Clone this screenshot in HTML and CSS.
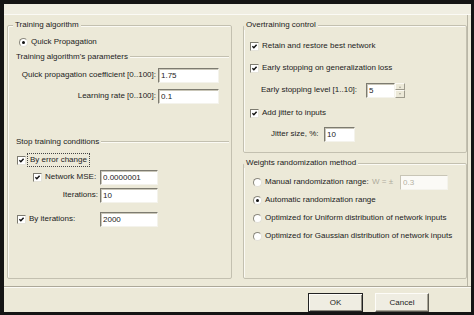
FILE: index.html
```
<!DOCTYPE html>
<html lang="en">
<head>
    <meta charset="UTF-8">
    <title>Training settings</title>
    <link rel="stylesheet" href="styles.css">
</head>
<body>
<div class="frame">
<div class="dialog">
    <div class="topbar"></div>

    <div class="page">
        <!-- Left: training algorithm -->
        <fieldset class="group group-left">
            <legend>Training algorithm</legend>
            <div class="row r-qp"><span class="radio on"></span><span class="txt">Quick Propagation</span></div>

            <div class="subhead sh-params"><span>Training algorithm's parameters</span></div>
            <div class="param p1"><label>Quick propagation coefficient [0..100]:</label><input class="field" type="text" value="1.75"></div>
            <div class="param p2"><label>Learning rate [0..100]:</label><input class="field" type="text" value="0.1"></div>

            <div class="subhead sh-stop"><span>Stop training conditions</span></div>
            <div class="row r-err">
                <span class="chk"><svg viewBox="0 0 9 9"><path d="M1.8 4.2l1.9 2L7.2 2.2"/></svg></span>
                <span class="txt focus">By error change</span>
            </div>
            <div class="stop s-mse">
                <div class="lab">
                    <span class="chk"><svg viewBox="0 0 9 9"><path d="M1.8 4.2l1.9 2L7.2 2.2"/></svg></span>
                    <span class="txt">Network MSE:</span>
                </div>
                <input class="field" type="text" value="0.0000001">
            </div>
            <div class="stop s-iter">
                <div class="lab lab-right"><span class="txt">Iterations:</span></div>
                <input class="field" type="text" value="10">
            </div>
            <div class="stop s-byit">
                <div class="lab">
                    <span class="chk"><svg viewBox="0 0 9 9"><path d="M1.8 4.2l1.9 2L7.2 2.2"/></svg></span>
                    <span class="txt">By iterations:</span>
                </div>
                <input class="field" type="text" value="2000">
            </div>
        </fieldset>

        <div class="col-right">
            <!-- Overtraining -->
            <fieldset class="group group-over">
                <legend>Overtraining control</legend>
                <div class="row o-retain">
                    <span class="chk"><svg viewBox="0 0 9 9"><path d="M1.8 4.2l1.9 2L7.2 2.2"/></svg></span>
                    <span class="txt">Retain and restore best network</span>
                </div>
                <div class="row o-early">
                    <span class="chk"><svg viewBox="0 0 9 9"><path d="M1.8 4.2l1.9 2L7.2 2.2"/></svg></span>
                    <span class="txt">Early stopping on generalization loss</span>
                </div>
                <div class="row o-level">
                    <span class="txt lvl-label">Early stopping level [1..10]:</span>
                    <input class="field field-level" type="text" value="5">
                    <span class="spin"><span class="spin-btn up"></span><span class="spin-btn down"></span></span>
                </div>
                <div class="row o-jitter">
                    <span class="chk"><svg viewBox="0 0 9 9"><path d="M1.8 4.2l1.9 2L7.2 2.2"/></svg></span>
                    <span class="txt">Add jitter to inputs</span>
                </div>
                <div class="row o-jsize">
                    <span class="txt jit-label">Jitter size, %:</span>
                    <input class="field field-jitter" type="text" value="10">
                </div>
            </fieldset>

            <!-- Weights -->
            <fieldset class="group group-weights">
                <legend>Weights randomization method</legend>
                <div class="row w-manual">
                    <span class="radio"></span>
                    <span class="txt man-label">Manual randomization range:</span>
                    <span class="txt dim w-eq">W = &plusmn;</span>
                    <input class="field field-off" type="text" value="0.3" disabled>
                </div>
                <div class="row w-auto"><span class="radio on"></span><span class="txt">Automatic randomization range</span></div>
                <div class="row w-uni"><span class="radio"></span><span class="txt">Optimized for Uniform distribution of network inputs</span></div>
                <div class="row w-gauss"><span class="radio"></span><span class="txt">Optimized for Gaussian distribution of network inputs</span></div>
            </fieldset>
        </div>
    </div>

    <div class="sep"></div>

    <div class="buttons">
        <button class="btn btn-default">OK</button>
        <button class="btn">Cancel</button>
    </div>
</div>
</div>
</body>
</html>
```

FILE: styles.css
```
* {
    box-sizing: border-box;
}
body {
    margin: 0;
    background: #151515;
    font-family: "Liberation Sans", Arial, sans-serif;
    font-size: 8px;
    line-height: 10px;
    color: #222;
}
.frame {
    width: 474px;
    height: 315px;
    background: #151515;
    padding: 4px 3px 3px 4px;
}
.dialog {
    height: 100%;
    background: #ece9d8;
    display: flex;
    flex-direction: column;
}
.topbar {
    height: 11px;
    background: #f0eee2;
    border-bottom: 1px solid #fbfaf5;
}
.page {
    display: flex;
    height: 271px;
    padding: 5px 0 0 3px;
    margin-right: 3px;
    border-right: 1px solid #b9b6a6;
}

/* group boxes */
.group {
    margin: 0;
    padding: 0;
    border: 1px solid #c3c0b0;
    border-radius: 2px;
    box-shadow: inset 1px 1px 0 #fbfaf4;
    min-width: 0;
}
.group legend {
    padding: 0 2px;
    line-height: 10px;
    background: #ece9d8;
}
.group-left {
    width: 225px;
    height: 259px;
}
.group-left legend {
    margin-left: 5px;
}
.col-right {
    margin-left: 11px;
    width: 224px;
    display: flex;
    flex-direction: column;
    gap: 5px;
}
.group-over {
    height: 133px;
}
.group-weights {
    height: 121px;
}

/* rows */
.row {
    display: flex;
    align-items: center;
    height: 14px;
}
.txt {
    white-space: nowrap;
}
.dim {
    color: #aeab9c;
}
.subhead {
    display: flex;
    align-items: center;
    height: 10px;
    padding-left: 7px;
    margin-right: 2px;
}
.subhead span {
    padding: 0 2px 0 1px;
    white-space: nowrap;
}
.subhead::after {
    content: "";
    flex: 1;
    border-top: 1px solid #c3c0b0;
    border-bottom: 1px solid #fbfaf4;
}
.param {
    display: flex;
    align-items: center;
    height: 16px;
}
.param label {
    width: 148px;
    text-align: right;
    margin-right: 2px;
    white-space: nowrap;
}
.param .field {
    width: 61px;
}
.stop {
    display: flex;
    align-items: center;
    height: 16px;
}
.stop .lab {
    width: 90px;
    display: flex;
    align-items: center;
    padding-left: 9px;
}
.stop .lab-right {
    justify-content: flex-end;
}
.stop .field {
    width: 58px;
    margin-left: 2px;
}

/* controls */
.field {
    height: 15px;
    padding: 1px 2px 0;
    font: inherit;
    color: #222;
    background: #fff;
    border: 1px solid;
    border-color: #7d7b70 #f4f3ec #f4f3ec #7d7b70;
    box-shadow: inset 1px 1px 0 #c9c6b8;
    outline: none;
}
.field-off {
    color: #b5b2a4;
    background: #fbfaf6;
    border-color: #c8c5b6 #f4f3ec #f4f3ec #c8c5b6;
    box-shadow: none;
}
.chk {
    width: 9px;
    height: 9px;
    flex: none;
    background: #fff;
    border: 1px solid;
    border-color: #7d7b70 #e6e4da #e6e4da #7d7b70;
    margin-right: 3px;
    display: flex;
}
.chk svg {
    width: 7px;
    height: 7px;
    fill: none;
    stroke: #111;
    stroke-width: 1.8;
}
.radio {
    width: 9px;
    height: 9px;
    flex: none;
    border-radius: 50%;
    background: #fff;
    border: 1px solid;
    border-color: #8a887c #e2e0d6 #e2e0d6 #8a887c;
    margin-right: 3px;
    position: relative;
}
.radio.on::after {
    content: "";
    position: absolute;
    left: 2px;
    top: 2px;
    width: 3px;
    height: 3px;
    border-radius: 50%;
    background: #111;
}
.focus {
    outline: 1px dotted #444;
    outline-offset: 1px;
    padding: 0 1px;
}

/* left rows */
.r-qp { margin-top: 5px; padding-left: 11px; }
.sh-params { margin-top: 3px; }
.p1 { margin-top: 5px; }
.p2 { margin-top: 5px; }
.sh-stop { margin-top: 33px; }
.r-err { margin-top: 6px; padding-left: 9px; }
.s-mse { margin-top: 2px; }
.s-mse .lab { padding-left: 25px; }
.s-iter { margin-top: 2px; }
.s-byit { margin-top: 8px; }

/* overtraining rows */
.o-retain { margin-top: 9px; padding-left: 6px; }
.o-early { margin-top: 8px; padding-left: 6px; }
.o-level { margin-top: 7px; padding-left: 17px; height: 16px; }
.o-jitter { margin-top: 8px; padding-left: 6px; }
.o-jsize { margin-top: 6px; padding-left: 27px; height: 16px; }
.lvl-label { width: 105px; }
.field-level { width: 29px; }
.jit-label { width: 53px; }
.field-jitter { width: 31px; }
.spin {
    display: flex;
    flex-direction: column;
    height: 15px;
}
.spin-btn {
    width: 10px;
    height: 7.5px;
    background: #ece9d8;
    border: 1px solid;
    border-color: #fbfaf4 #9d9a8c #9d9a8c #fbfaf4;
    position: relative;
}
.spin-btn::after {
    content: "";
    position: absolute;
    left: 3px;
    top: 2px;
    border-left: 1.5px solid transparent;
    border-right: 1.5px solid transparent;
}
.spin-btn.up::after { border-bottom: 2px solid #a9a698; }
.spin-btn.down::after { border-top: 2px solid #a9a698; }

/* weights rows */
.w-manual { margin-top: 6px; padding-left: 9px; height: 16px; }
.w-auto { margin-top: 3px; padding-left: 9px; }
.w-uni { margin-top: 4px; padding-left: 9px; }
.w-gauss { margin-top: 4px; padding-left: 9px; }
.man-label { width: 107px; }
.w-eq { width: 28px; }
.field-off { width: 48px; }

/* bottom */
.sep {
    border-top: 1px solid #aca899;
    border-bottom: 1px solid #fbfaf5;
}
.buttons {
    display: flex;
    justify-content: flex-end;
    gap: 12px;
    padding: 5px 42px 0 0;
}
.btn {
    width: 54px;
    height: 19px;
    padding: 0;
    font: inherit;
    color: #222;
    background: #efede2;
    border: 1px solid;
    border-color: #fdfcf8 #5d5b52 #5d5b52 #fdfcf8;
    box-shadow: inset -1px -1px 0 #a8a597;
}
.btn-default {
    width: 55px;
    border: 1px solid #222;
    box-shadow: inset 1px 1px 0 #fdfcf8, inset -1px -1px 0 #8c8a7e;
}
```
